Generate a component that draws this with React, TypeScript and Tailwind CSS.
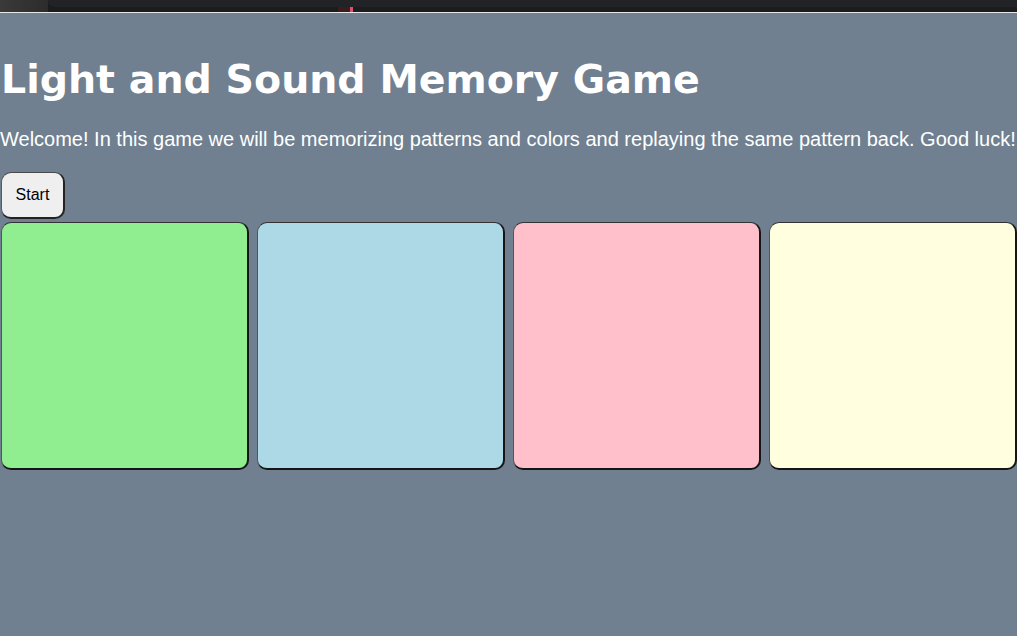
import React from 'react';

const pads = [
    { id: 1, color: 'bg-[#90ee90]' },
    { id: 2, color: 'bg-[#add8e6]' },
    { id: 3, color: 'bg-[#ffc0cb]' },
    { id: 4, color: 'bg-[#ffffe0]' },
];

export default function App() {
    return (
        <div className="w-[1017px] h-[636px] overflow-hidden bg-[#708090] flex flex-col">
            {/* browser chrome strip */}
            <div className="h-[12px] flex bg-[#1b1c1e]">
                <div className="w-[48px] bg-gradient-to-r from-[#3a3a3a] to-[#2c2c2c]" />
                <div className="flex-1 flex flex-col">
                    <div className="h-[7px] bg-[#222326] rounded-bl-[6px]" />
                    <div className="flex-1 flex">
                        <div className="w-[290px]" />
                        <div className="w-[12px] bg-[#3a1c20]" />
                        <div className="w-[3px] bg-[#e0506a]" />
                    </div>
                </div>
            </div>
            <div className="h-px bg-[#e8e8e8]" />

            <h1 className="mt-[43px] pl-[1px] text-[39.5px] leading-[47px] font-bold text-white font-['DejaVu_Sans',Verdana,sans-serif]">
                Light and Sound Memory Game
            </h1>
            <p className="mt-[25px] text-[20px] leading-[23px] text-white whitespace-nowrap font-['Liberation_Sans',Arial,sans-serif]">
                Welcome! In this game we will be memorizing patterns and colors and replaying the same pattern back. Good luck!
            </p>
            <div className="mt-[21px] ml-[1px]">
                <button className="w-[64px] h-[47px] rounded-[10px] bg-[#efefef] border border-r-2 border-b-2 border-[#222] border-l-[#5a5a5a] border-t-[#4a4a4a] text-[16px] text-black font-['Liberation_Sans',Arial,sans-serif]">
                    Start
                </button>
            </div>
            <div className="mt-[3px] ml-[1px] flex gap-[8px]">
                {pads.map((p) => (
                    <div
                        key={p.id}
                        className={`w-[248px] h-[248px] rounded-[10px] border border-r-2 border-b-2 border-[#151515] border-l-[#555] border-t-[#333] ${p.color}`}
                    />
                ))}
            </div>
        </div>
    );
}
